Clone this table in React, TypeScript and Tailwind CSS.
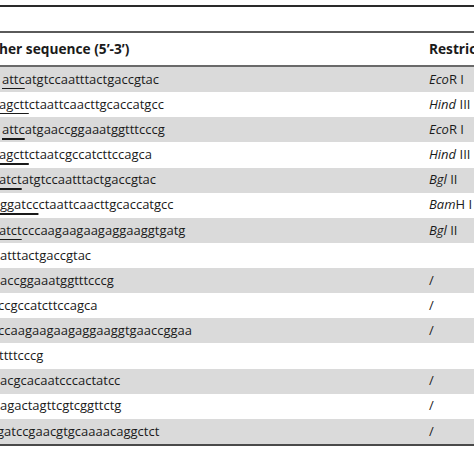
import React from 'react';

type Row = { off: string; site?: string; rest: string; enz?: React.ReactNode };

const rows: Row[] = [
  { off: 'ml-[2px]', site: 'attc', rest: 'atgtccaatttactgaccgtac', enz: <><i>Eco</i>R I</> },
  { off: '-ml-[1px]', site: 'agctt', rest: 'ctaattcaacttgcaccatgcc', enz: <><i>Hind</i> III</> },
  { off: 'ml-[2px]', site: 'attc', rest: 'atgaaccggaaatggtttcccg', enz: <><i>Eco</i>R I</> },
  { off: '-ml-[1px]', site: 'agctt', rest: 'ctaatcgccatcttccagca', enz: <><i>Hind</i> III</> },
  { off: '-ml-[1px]', site: 'atct', rest: 'atgtccaatttactgaccgtac', enz: <><i>Bgl</i> II</> },
  { off: 'ml-0', site: 'ggatcc', rest: 'ctaattcaacttgcaccatgcc', enz: <><i>Bam</i>H I</> },
  { off: '-ml-[1px]', site: 'atct', rest: 'cccaagaagaagaggaaggtgatg', enz: <><i>Bgl</i> II</> },
  { off: 'ml-0', rest: 'atttactgaccgtac' },
  { off: 'ml-0', rest: 'accggaaatggtttcccg', enz: '/' },
  { off: '-ml-[2px]', rest: 'ccgccatcttccagca', enz: '/' },
  { off: '-ml-[2px]', rest: 'ccaagaagaagaggaaggtgaaccggaa', enz: '/' },
  { off: '-ml-[1px]', rest: 'ttttcccg' },
  { off: 'ml-0', rest: 'acgcacaatcccactatcc', enz: '/' },
  { off: 'ml-0', rest: 'agactagttcgtcggttctg', enz: '/' },
  { off: '-ml-[3px]', rest: 'gatccgaacgtgcaaaacaggctct', enz: '/' },
];

export default function App() {
  return (
    <div className="w-[474px] h-[474px] overflow-hidden bg-white pt-[5px] font-['Open_Sans',sans-serif] text-[13px] text-[#1a1a1a]">
      <div className="border-t-2 border-[#2a2a2a] h-[26px]" />
      <div className="border-t-2 border-[#5a5a5a] h-[34px] flex items-center font-bold text-[13.7px]">
        <div className="w-[429px] shrink-0 overflow-hidden whitespace-nowrap">
          <span className="-ml-[1px] inline-block">her sequence (5’-3’)</span>
        </div>
        <div className="whitespace-nowrap">Restriction site</div>
      </div>
      <div className="border-t-2 border-b-2 border-t-[#6a6a6a] border-b-[#4a4a4a]">
        {rows.map((r, i) => (
          <div key={i} className={`flex items-center h-[25.13px] ${i % 2 === 0 ? 'bg-[#dadada]' : 'bg-white'}`}>
            <div className="w-[429px] shrink-0 overflow-hidden whitespace-nowrap">
              <span className={`inline-block ${r.off}`}>
                {r.site && (
                  <span className="underline decoration-[1.5px] underline-offset-[4px] decoration-[#1a1a1a]">{r.site}</span>
                )}
                {r.rest}
              </span>
            </div>
            <div className="whitespace-nowrap">{r.enz}</div>
          </div>
        ))}
      </div>
    </div>
  );
}
